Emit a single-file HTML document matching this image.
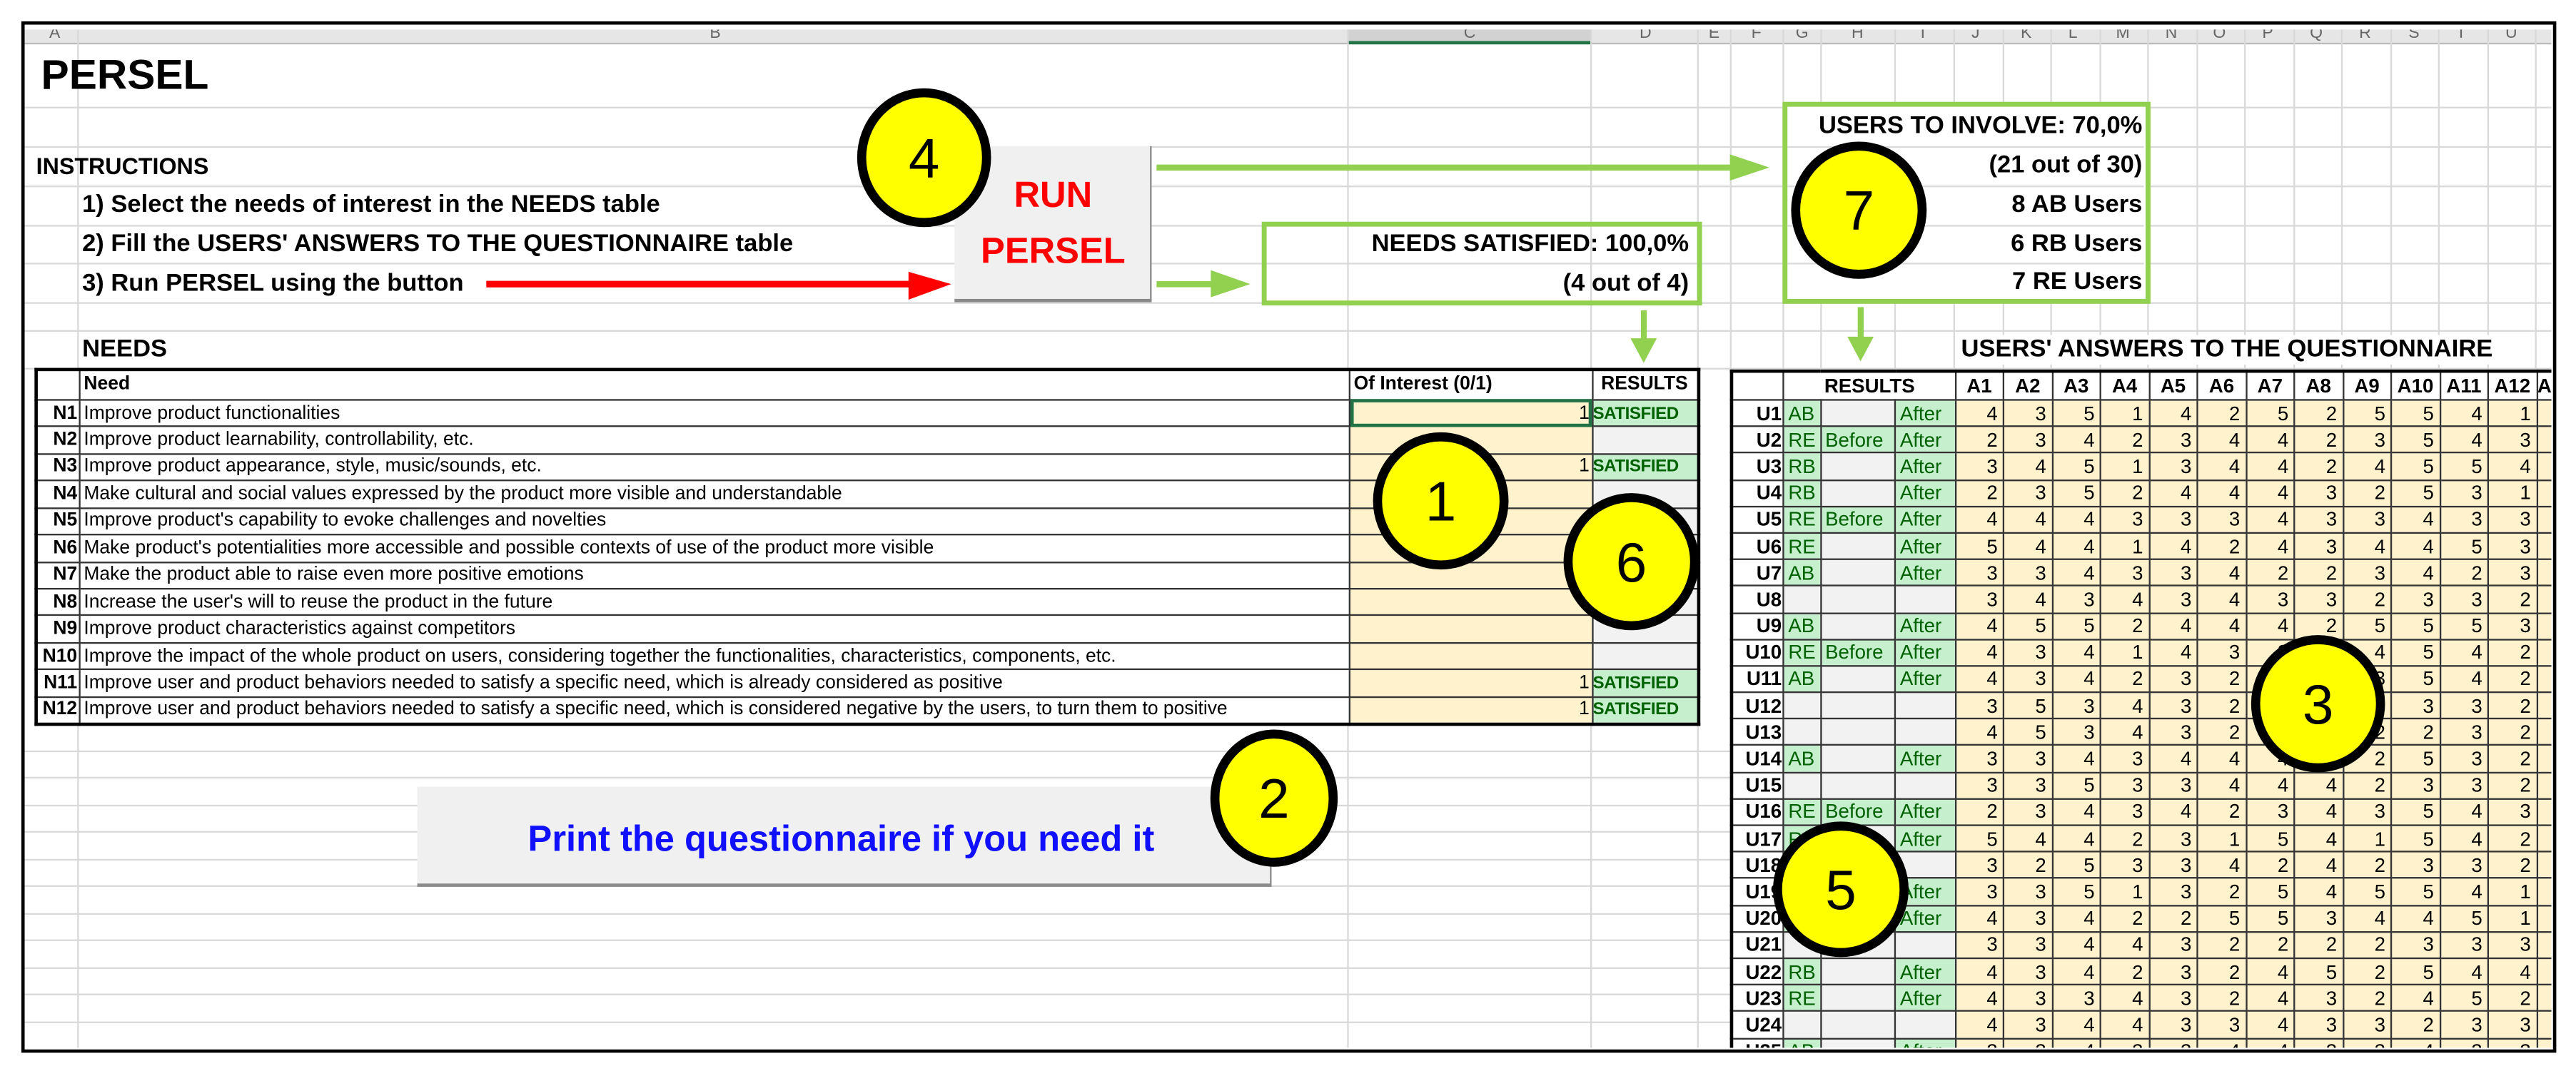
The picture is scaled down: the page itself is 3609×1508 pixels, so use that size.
<!DOCTYPE html>
<html><head><meta charset="utf-8">
<style>
*{margin:0;padding:0;box-sizing:border-box}
html,body{width:3609px;height:1508px;overflow:hidden;background:#fff}
#p{position:absolute;left:0;top:0;width:1568px;height:655px;transform:scale(2.30166);transform-origin:0 0;font-family:"Liberation Sans Narrow","Liberation Sans",sans-serif;color:#000}
.a{position:absolute}
#clip{position:absolute;left:15px;top:15px;width:1538px;height:623px;overflow:hidden}
#in{position:absolute;left:-15px;top:-15px;width:1568px;height:655px}
.hl{position:absolute;height:1px;background:#d9d9d9}
.vl{position:absolute;width:1px;background:#d9d9d9}
.b{font-weight:bold}
.t{position:absolute;white-space:nowrap}
table{border-collapse:collapse;table-layout:fixed;position:absolute;background:#fff}
td,th{padding:0;overflow:hidden;white-space:nowrap}
.nd{left:20.5px;top:224px;width:1012px;border:2px solid #000;font-size:11.5px}
.nd td,.nd th{border:1px solid #333;height:16.45px;line-height:14px}
.nd tr.h td{height:18.4px;font-weight:bold}
.nd .l{text-align:right;font-weight:bold;padding-right:1px}
.nd .d{padding-left:2px}
.y{background:#fff2cc}
.e{background:#f2f2f2}
.g{background:#c6efce;color:#006100}
.nd .g{font-weight:bold;font-size:10.5px;letter-spacing:-0.2px}
.nd .c{text-align:right;padding-right:1px}
.ans{left:1052.7px;top:225px;width:520px;border:2px solid #000;font-size:12px}
.ans td{border:1px solid #333;height:16.2px;line-height:14px}
.ans tr.h td{height:17.5px;font-weight:bold;text-align:center;background:#fff}
.ans td.u{text-align:right;font-weight:bold;padding-right:1px;background:#fff}
.ans td.n{background:#fff2cc;text-align:right;padding-right:3px}
.ans td.g,.ans td.e{padding-left:2px}
.colh{position:absolute;top:18px;height:9px;font-size:10px;color:#666;line-height:6px;overflow:hidden}
</style></head><body>
<div id="p">
<div id="clip"><div id="in">
<div class="a" style="left:15px;top:18px;width:1538px;height:9px;background:#e6e6e6;border-bottom:1px solid #bbb"></div>
<div class="a" style="left:820px;top:18px;width:148px;height:9px;background:#d2d2d2;border-bottom:2px solid #217346"></div>
<div class="colh" style="left:30px">A</div><div class="colh" style="left:432px">B</div><div class="colh" style="left:891px">C</div><div class="colh" style="left:998px">D</div><div class="colh" style="left:1040px">E</div><div class="colh" style="left:1066px">F</div><div class="colh" style="left:1093px">G</div><div class="colh" style="left:1127px">H</div><div class="colh" style="left:1169px">I</div><div class="colh" style="left:1200px">J</div><div class="colh" style="left:1230px">K</div><div class="colh" style="left:1259px">L</div><div class="colh" style="left:1288px">M</div><div class="colh" style="left:1318px">N</div><div class="colh" style="left:1347px">O</div><div class="colh" style="left:1377px">P</div><div class="colh" style="left:1406px">Q</div><div class="colh" style="left:1436px">R</div><div class="colh" style="left:1466px">S</div><div class="colh" style="left:1495px">T</div><div class="colh" style="left:1525px">U</div>
<div class="vl" style="left:47px;top:18px;height:622px"></div>
<div class="vl" style="left:820px;top:18px;height:622px"></div>
<div class="vl" style="left:968px;top:18px;height:622px"></div>
<div class="vl" style="left:1033px;top:18px;height:622px"></div>
<div class="vl" style="left:1053px;top:18px;height:622px"></div>
<div class="vl" style="left:1085px;top:18px;height:207px"></div>
<div class="vl" style="left:1107.5px;top:18px;height:207px"></div>
<div class="vl" style="left:1153px;top:18px;height:207px"></div>
<div class="vl" style="left:1189px;top:18px;height:207px"></div>
<div class="vl" style="left:1218.5px;top:18px;height:207px"></div>
<div class="vl" style="left:1248px;top:18px;height:207px"></div>
<div class="vl" style="left:1277.5px;top:18px;height:207px"></div>
<div class="vl" style="left:1307px;top:18px;height:207px"></div>
<div class="vl" style="left:1336.5px;top:18px;height:207px"></div>
<div class="vl" style="left:1366px;top:18px;height:207px"></div>
<div class="vl" style="left:1395.5px;top:18px;height:207px"></div>
<div class="vl" style="left:1425px;top:18px;height:207px"></div>
<div class="vl" style="left:1454.5px;top:18px;height:207px"></div>
<div class="vl" style="left:1484px;top:18px;height:207px"></div>
<div class="vl" style="left:1513.5px;top:18px;height:207px"></div>
<div class="vl" style="left:1543px;top:18px;height:207px"></div>
<div class="hl" style="left:15px;top:65px;width:1538px"></div>
<div class="hl" style="left:15px;top:89px;width:1538px"></div>
<div class="hl" style="left:15px;top:112.5px;width:1538px"></div>
<div class="hl" style="left:15px;top:136.5px;width:1538px"></div>
<div class="hl" style="left:15px;top:160px;width:1538px"></div>
<div class="hl" style="left:15px;top:183.5px;width:1538px"></div>
<div class="hl" style="left:15px;top:200.5px;width:1538px"></div>
<div class="hl" style="left:15px;top:224px;width:1538px"></div>
<div class="hl" style="left:15px;top:456.5px;width:1038px"></div>
<div class="hl" style="left:15px;top:473px;width:1038px"></div>
<div class="hl" style="left:15px;top:489.5px;width:1038px"></div>
<div class="hl" style="left:15px;top:506px;width:1038px"></div>
<div class="hl" style="left:15px;top:522.5px;width:1038px"></div>
<div class="hl" style="left:15px;top:539px;width:1038px"></div>
<div class="hl" style="left:15px;top:555.5px;width:1038px"></div>
<div class="hl" style="left:15px;top:572px;width:1038px"></div>
<div class="hl" style="left:15px;top:588.5px;width:1038px"></div>
<div class="hl" style="left:15px;top:605px;width:1038px"></div>
<div class="hl" style="left:15px;top:621.5px;width:1038px"></div>
<div class="hl" style="left:15px;top:638px;width:1038px"></div>

<div class="t b" style="left:25px;top:31px;font-size:25.5px;line-height:30px">PERSEL</div>
<div class="t b" style="left:22px;top:92px;font-size:14px;line-height:18px">INSTRUCTIONS</div>
<div class="t b" style="left:50px;top:116px;font-size:15px;line-height:18px">1) Select the needs of interest in the NEEDS table</div>
<div class="t b" style="left:50px;top:140px;font-size:15px;line-height:18px">2) Fill the USERS' ANSWERS TO THE QUESTIONNAIRE table</div>
<div class="t b" style="left:50px;top:164px;font-size:15px;line-height:18px">3) Run PERSEL using the button</div>
<div class="t b" style="left:50px;top:204px;font-size:15px;line-height:18px">NEEDS</div>

<div class="a" style="left:581px;top:89px;width:120px;height:95px;background:#f0f0f0;border-right:1px solid #8a8a8a;border-bottom:2px solid #8a8a8a"></div>
<div class="t b" style="left:581px;top:105px;width:120px;text-align:center;font-size:22px;line-height:28px;color:#ff0000">RUN</div>
<div class="t b" style="left:581px;top:139px;width:120px;text-align:center;font-size:22px;line-height:28px;color:#ff0000">PERSEL</div>

<div class="a" style="left:767.5px;top:134.5px;width:268px;height:51px;border:3.5px solid #92d050"></div>
<div class="t b" style="left:780px;top:140px;width:248px;text-align:right;font-size:15px;line-height:18px">NEEDS SATISFIED: 100,0%</div>
<div class="t b" style="left:780px;top:164px;width:248px;text-align:right;font-size:15px;line-height:18px">(4 out of 4)</div>

<div class="a" style="left:1084.5px;top:62px;width:224px;height:123px;border:3.5px solid #92d050;background:#fff"></div>
<div class="hl" style="left:1088px;top:89px;width:217px"></div>
<div class="hl" style="left:1088px;top:112.5px;width:217px"></div>
<div class="hl" style="left:1088px;top:136.5px;width:217px"></div>
<div class="hl" style="left:1088px;top:160px;width:217px"></div>
<div class="t b" style="left:1090px;top:68px;width:214px;text-align:right;font-size:15px;line-height:18px">USERS TO INVOLVE: 70,0%</div>
<div class="t b" style="left:1090px;top:92px;width:214px;text-align:right;font-size:15px;line-height:18px">(21 out of 30)</div>
<div class="t b" style="left:1090px;top:115.5px;width:214px;text-align:right;font-size:15px;line-height:18px">8 AB Users</div>
<div class="t b" style="left:1090px;top:139.5px;width:214px;text-align:right;font-size:15px;line-height:18px">6 RB Users</div>
<div class="t b" style="left:1090px;top:163px;width:214px;text-align:right;font-size:15px;line-height:18px">7 RE Users</div>

<div class="t b" style="left:1192px;top:204px;width:327px;text-align:center;font-size:15px;line-height:18px;background:#fff">USERS' ANSWERS TO THE QUESTIONNAIRE</div>

<div class="a" style="left:254px;top:478.5px;width:519.5px;height:61px;background:#f0f0f0;border-right:1px solid #8a8a8a;border-bottom:2px solid #8a8a8a"></div>
<div class="t b" style="left:254px;top:497px;width:516px;text-align:center;font-size:22px;line-height:28px;color:#1010ff">Print the questionnaire if you need it</div>

<table class="nd">
<colgroup><col style="width:27px"><col style="width:773px"><col style="width:147.5px"><col style="width:64.5px"></colgroup>
<tr class="h"><td></td><td class="d">Need</td><td class="d">Of Interest (0/1)</td><td style="text-align:center">RESULTS</td></tr>
<tr><td class="l">N1</td><td class="d">Improve product functionalities</td><td class="y c" style="outline:2px solid #217346;outline-offset:-2px">1</td><td class="g">SATISFIED</td></tr>
<tr><td class="l">N2</td><td class="d">Improve product learnability, controllability, etc.</td><td class="y c"></td><td class="e"></td></tr>
<tr><td class="l">N3</td><td class="d">Improve product appearance, style, music/sounds, etc.</td><td class="y c">1</td><td class="g">SATISFIED</td></tr>
<tr><td class="l">N4</td><td class="d">Make cultural and social values expressed by the product more visible and understandable</td><td class="y c"></td><td class="e"></td></tr>
<tr><td class="l">N5</td><td class="d">Improve product's capability to evoke challenges and novelties</td><td class="y c"></td><td class="e"></td></tr>
<tr><td class="l">N6</td><td class="d">Make product's potentialities more accessible and possible contexts of use of the product more visible</td><td class="y c"></td><td class="e"></td></tr>
<tr><td class="l">N7</td><td class="d">Make the product able to raise even more positive emotions</td><td class="y c"></td><td class="e"></td></tr>
<tr><td class="l">N8</td><td class="d">Increase the user's will to reuse the product in the future</td><td class="y c"></td><td class="e"></td></tr>
<tr><td class="l">N9</td><td class="d">Improve product characteristics against competitors</td><td class="y c"></td><td class="e"></td></tr>
<tr><td class="l">N10</td><td class="d">Improve the impact of the whole product on users, considering together the functionalities, characteristics, components, etc.</td><td class="y c"></td><td class="e"></td></tr>
<tr><td class="l">N11</td><td class="d">Improve user and product behaviors needed to satisfy a specific need, which is already considered as positive</td><td class="y c">1</td><td class="g">SATISFIED</td></tr>
<tr><td class="l">N12</td><td class="d">Improve user and product behaviors needed to satisfy a specific need, which is considered negative by the users, to turn them to positive</td><td class="y c">1</td><td class="g">SATISFIED</td></tr>
</table>

<table class="ans">
<colgroup><col style="width:32.3px"><col style="width:22.5px"><col style="width:45.5px"><col style="width:36px"><col style="width:29.5px"><col style="width:29.5px"><col style="width:29.5px"><col style="width:29.5px"><col style="width:29.5px"><col style="width:29.5px"><col style="width:29.5px"><col style="width:29.5px"><col style="width:29.5px"><col style="width:29.5px"><col style="width:29.5px"><col style="width:29.5px"><col style="width:30px"></colgroup>
<tr class="h"><td></td><td colspan="3">RESULTS</td><td>A1</td><td>A2</td><td>A3</td><td>A4</td><td>A5</td><td>A6</td><td>A7</td><td>A8</td><td>A9</td><td>A10</td><td>A11</td><td>A12</td><td style="text-align:left">A13</td></tr>
<tr><td class="u">U1</td><td class="g">AB</td><td class="e"></td><td class="g">After</td><td class="n">4</td><td class="n">3</td><td class="n">5</td><td class="n">1</td><td class="n">4</td><td class="n">2</td><td class="n">5</td><td class="n">2</td><td class="n">5</td><td class="n">5</td><td class="n">4</td><td class="n">1</td><td class="n"></td></tr>
<tr><td class="u">U2</td><td class="g">RE</td><td class="g">Before</td><td class="g">After</td><td class="n">2</td><td class="n">3</td><td class="n">4</td><td class="n">2</td><td class="n">3</td><td class="n">4</td><td class="n">4</td><td class="n">2</td><td class="n">3</td><td class="n">5</td><td class="n">4</td><td class="n">3</td><td class="n"></td></tr>
<tr><td class="u">U3</td><td class="g">RB</td><td class="e"></td><td class="g">After</td><td class="n">3</td><td class="n">4</td><td class="n">5</td><td class="n">1</td><td class="n">3</td><td class="n">4</td><td class="n">4</td><td class="n">2</td><td class="n">4</td><td class="n">5</td><td class="n">5</td><td class="n">4</td><td class="n"></td></tr>
<tr><td class="u">U4</td><td class="g">RB</td><td class="e"></td><td class="g">After</td><td class="n">2</td><td class="n">3</td><td class="n">5</td><td class="n">2</td><td class="n">4</td><td class="n">4</td><td class="n">4</td><td class="n">3</td><td class="n">2</td><td class="n">5</td><td class="n">3</td><td class="n">1</td><td class="n"></td></tr>
<tr><td class="u">U5</td><td class="g">RE</td><td class="g">Before</td><td class="g">After</td><td class="n">4</td><td class="n">4</td><td class="n">4</td><td class="n">3</td><td class="n">3</td><td class="n">3</td><td class="n">4</td><td class="n">3</td><td class="n">3</td><td class="n">4</td><td class="n">3</td><td class="n">3</td><td class="n"></td></tr>
<tr><td class="u">U6</td><td class="g">RE</td><td class="e"></td><td class="g">After</td><td class="n">5</td><td class="n">4</td><td class="n">4</td><td class="n">1</td><td class="n">4</td><td class="n">2</td><td class="n">4</td><td class="n">3</td><td class="n">4</td><td class="n">4</td><td class="n">5</td><td class="n">3</td><td class="n"></td></tr>
<tr><td class="u">U7</td><td class="g">AB</td><td class="e"></td><td class="g">After</td><td class="n">3</td><td class="n">3</td><td class="n">4</td><td class="n">3</td><td class="n">3</td><td class="n">4</td><td class="n">2</td><td class="n">2</td><td class="n">3</td><td class="n">4</td><td class="n">2</td><td class="n">3</td><td class="n"></td></tr>
<tr><td class="u">U8</td><td class="e"></td><td class="e"></td><td class="e"></td><td class="n">3</td><td class="n">4</td><td class="n">3</td><td class="n">4</td><td class="n">3</td><td class="n">4</td><td class="n">3</td><td class="n">3</td><td class="n">2</td><td class="n">3</td><td class="n">3</td><td class="n">2</td><td class="n"></td></tr>
<tr><td class="u">U9</td><td class="g">AB</td><td class="e"></td><td class="g">After</td><td class="n">4</td><td class="n">5</td><td class="n">5</td><td class="n">2</td><td class="n">4</td><td class="n">4</td><td class="n">4</td><td class="n">2</td><td class="n">5</td><td class="n">5</td><td class="n">5</td><td class="n">3</td><td class="n"></td></tr>
<tr><td class="u">U10</td><td class="g">RE</td><td class="g">Before</td><td class="g">After</td><td class="n">4</td><td class="n">3</td><td class="n">4</td><td class="n">1</td><td class="n">4</td><td class="n">3</td><td class="n">3</td><td class="n">3</td><td class="n">4</td><td class="n">5</td><td class="n">4</td><td class="n">2</td><td class="n"></td></tr>
<tr><td class="u">U11</td><td class="g">AB</td><td class="e"></td><td class="g">After</td><td class="n">4</td><td class="n">3</td><td class="n">4</td><td class="n">2</td><td class="n">3</td><td class="n">2</td><td class="n">3</td><td class="n">3</td><td class="n">3</td><td class="n">5</td><td class="n">4</td><td class="n">2</td><td class="n"></td></tr>
<tr><td class="u">U12</td><td class="e"></td><td class="e"></td><td class="e"></td><td class="n">3</td><td class="n">5</td><td class="n">3</td><td class="n">4</td><td class="n">3</td><td class="n">2</td><td class="n">3</td><td class="n">3</td><td class="n">3</td><td class="n">3</td><td class="n">3</td><td class="n">2</td><td class="n"></td></tr>
<tr><td class="u">U13</td><td class="e"></td><td class="e"></td><td class="e"></td><td class="n">4</td><td class="n">5</td><td class="n">3</td><td class="n">4</td><td class="n">3</td><td class="n">2</td><td class="n">3</td><td class="n">3</td><td class="n">2</td><td class="n">2</td><td class="n">3</td><td class="n">2</td><td class="n"></td></tr>
<tr><td class="u">U14</td><td class="g">AB</td><td class="e"></td><td class="g">After</td><td class="n">3</td><td class="n">3</td><td class="n">4</td><td class="n">3</td><td class="n">4</td><td class="n">4</td><td class="n">4</td><td class="n">3</td><td class="n">2</td><td class="n">5</td><td class="n">3</td><td class="n">2</td><td class="n"></td></tr>
<tr><td class="u">U15</td><td class="e"></td><td class="e"></td><td class="e"></td><td class="n">3</td><td class="n">3</td><td class="n">5</td><td class="n">3</td><td class="n">3</td><td class="n">4</td><td class="n">4</td><td class="n">4</td><td class="n">2</td><td class="n">3</td><td class="n">3</td><td class="n">2</td><td class="n"></td></tr>
<tr><td class="u">U16</td><td class="g">RE</td><td class="g">Before</td><td class="g">After</td><td class="n">2</td><td class="n">3</td><td class="n">4</td><td class="n">3</td><td class="n">4</td><td class="n">2</td><td class="n">3</td><td class="n">4</td><td class="n">3</td><td class="n">5</td><td class="n">4</td><td class="n">3</td><td class="n"></td></tr>
<tr><td class="u">U17</td><td class="g">RE</td><td class="e"></td><td class="g">After</td><td class="n">5</td><td class="n">4</td><td class="n">4</td><td class="n">2</td><td class="n">3</td><td class="n">1</td><td class="n">5</td><td class="n">4</td><td class="n">1</td><td class="n">5</td><td class="n">4</td><td class="n">2</td><td class="n"></td></tr>
<tr><td class="u">U18</td><td class="e"></td><td class="e"></td><td class="e"></td><td class="n">3</td><td class="n">2</td><td class="n">5</td><td class="n">3</td><td class="n">3</td><td class="n">4</td><td class="n">2</td><td class="n">4</td><td class="n">2</td><td class="n">3</td><td class="n">3</td><td class="n">2</td><td class="n"></td></tr>
<tr><td class="u">U19</td><td class="g">AB</td><td class="e"></td><td class="g">After</td><td class="n">3</td><td class="n">3</td><td class="n">5</td><td class="n">1</td><td class="n">3</td><td class="n">2</td><td class="n">5</td><td class="n">4</td><td class="n">5</td><td class="n">5</td><td class="n">4</td><td class="n">1</td><td class="n"></td></tr>
<tr><td class="u">U20</td><td class="g">AB</td><td class="e"></td><td class="g">After</td><td class="n">4</td><td class="n">3</td><td class="n">4</td><td class="n">2</td><td class="n">2</td><td class="n">5</td><td class="n">5</td><td class="n">3</td><td class="n">4</td><td class="n">4</td><td class="n">5</td><td class="n">1</td><td class="n"></td></tr>
<tr><td class="u">U21</td><td class="e"></td><td class="e"></td><td class="e"></td><td class="n">3</td><td class="n">3</td><td class="n">4</td><td class="n">4</td><td class="n">3</td><td class="n">2</td><td class="n">2</td><td class="n">2</td><td class="n">2</td><td class="n">3</td><td class="n">3</td><td class="n">3</td><td class="n"></td></tr>
<tr><td class="u">U22</td><td class="g">RB</td><td class="e"></td><td class="g">After</td><td class="n">4</td><td class="n">3</td><td class="n">4</td><td class="n">2</td><td class="n">3</td><td class="n">2</td><td class="n">4</td><td class="n">5</td><td class="n">2</td><td class="n">5</td><td class="n">4</td><td class="n">4</td><td class="n"></td></tr>
<tr><td class="u">U23</td><td class="g">RE</td><td class="e"></td><td class="g">After</td><td class="n">4</td><td class="n">3</td><td class="n">3</td><td class="n">4</td><td class="n">3</td><td class="n">2</td><td class="n">4</td><td class="n">3</td><td class="n">2</td><td class="n">4</td><td class="n">5</td><td class="n">2</td><td class="n"></td></tr>
<tr><td class="u">U24</td><td class="e"></td><td class="e"></td><td class="e"></td><td class="n">4</td><td class="n">3</td><td class="n">4</td><td class="n">4</td><td class="n">3</td><td class="n">3</td><td class="n">4</td><td class="n">3</td><td class="n">3</td><td class="n">2</td><td class="n">3</td><td class="n">3</td><td class="n"></td></tr>
<tr><td class="u">U25</td><td class="g">AB</td><td class="e"></td><td class="g">After</td><td class="n">3</td><td class="n">3</td><td class="n">4</td><td class="n">3</td><td class="n">3</td><td class="n">4</td><td class="n">4</td><td class="n">3</td><td class="n">3</td><td class="n">4</td><td class="n">3</td><td class="n">3</td><td class="n"></td></tr>
</table>

<svg class="a" style="left:0;top:0" width="1568" height="655" viewBox="0 0 1568 655">
<rect x="296" y="171" width="260" height="4" fill="#ff0000"/>
<polygon points="553,165.5 579,173 553,182.5" fill="#ff0000"/>
<rect x="704" y="171.2" width="35" height="3.7" fill="#92d050"/>
<polygon points="737,164.5 761,173 737,181" fill="#92d050"/>
<rect x="704" y="100.2" width="352" height="3.7" fill="#92d050"/>
<polygon points="1053,94 1077,102 1053,110" fill="#92d050"/>
<rect x="998.8" y="189" width="3.6" height="19" fill="#92d050"/>
<polygon points="992.5,206 1008.5,206 1000.5,221" fill="#92d050"/>
<rect x="1130.8" y="187" width="3.6" height="20" fill="#92d050"/>
<polygon points="1124.5,205 1140.5,205 1132.5,220" fill="#92d050"/>
<g fill="#ffff00" stroke="#000" stroke-width="5.5">
<ellipse cx="877" cy="305" rx="38.5" ry="39"/>
<ellipse cx="775.5" cy="486" rx="36" ry="39"/>
<ellipse cx="1411" cy="428.5" rx="38" ry="39"/>
<ellipse cx="562.5" cy="96" rx="38" ry="39.5"/>
<ellipse cx="1120.5" cy="541.5" rx="38.5" ry="38.5"/>
<ellipse cx="993" cy="342" rx="38.5" ry="39"/>
<ellipse cx="1131.5" cy="128" rx="38.5" ry="39"/>
</g>
<g font-family="Liberation Sans, sans-serif" font-size="34" text-anchor="middle" fill="#000">
<text x="877" y="317">1</text>
<text x="775.5" y="498">2</text>
<text x="1411" y="440.5">3</text>
<text x="562.5" y="108">4</text>
<text x="1120.5" y="553.5">5</text>
<text x="993" y="354">6</text>
<text x="1131.5" y="140">7</text>
</g>
</svg>
</div></div>
<div class="a" style="left:12.5px;top:12.5px;width:1543.5px;height:628px;border:2.6px solid #000"></div>
</div>
</body></html>
